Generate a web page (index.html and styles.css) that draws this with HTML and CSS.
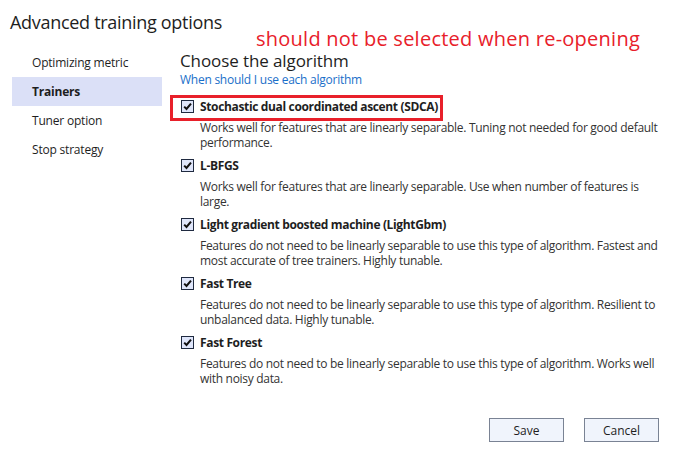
FILE: index.html
```html
<!DOCTYPE html>
<html lang="en">
<head>
    <meta charset="UTF-8">
    <title>Advanced training options</title>
    <link rel="stylesheet" href="styles.css">
</head>
<body>
    <div class="dialog">
        <h1 class="title">Advanced training options</h1>
        <div class="note">should not be selected when re-opening</div>
        <div class="main">
            <ul class="nav">
                <li>Optimizing metric</li>
                <li class="active">Trainers</li>
                <li>Tuner option</li>
                <li>Stop strategy</li>
            </ul>
            <div class="content">
                <h2 class="heading">Choose the algorithm</h2>
                <a class="help" href="#">When should I use each algorithm</a>
                <div class="algos">
                    <div class="algo flagged">
                        <label class="algo-label"><span class="check"><svg viewBox="0 0 11 11"><path d="M2.2 5.6 L4.5 8 L9 2.6"/></svg></span>Stochastic dual coordinated ascent (SDCA)</label>
                        <p class="desc">Works well for features that are linearly separable. Tuning not needed for good default performance.</p>
                    </div>
                    <div class="algo">
                        <label class="algo-label"><span class="check"><svg viewBox="0 0 11 11"><path d="M2.2 5.6 L4.5 8 L9 2.6"/></svg></span>L-BFGS</label>
                        <p class="desc">Works well for features that are linearly separable. Use when number of features is large.</p>
                    </div>
                    <div class="algo">
                        <label class="algo-label"><span class="check"><svg viewBox="0 0 11 11"><path d="M2.2 5.6 L4.5 8 L9 2.6"/></svg></span>Light gradient boosted machine (LightGbm)</label>
                        <p class="desc">Features do not need to be linearly separable to use this type of algorithm. Fastest and most accurate of tree trainers. Highly tunable.</p>
                    </div>
                    <div class="algo">
                        <label class="algo-label"><span class="check"><svg viewBox="0 0 11 11"><path d="M2.2 5.6 L4.5 8 L9 2.6"/></svg></span>Fast Tree</label>
                        <p class="desc">Features do not need to be linearly separable to use this type of algorithm. Resilient to unbalanced data. Highly tunable.</p>
                    </div>
                    <div class="algo">
                        <label class="algo-label"><span class="check"><svg viewBox="0 0 11 11"><path d="M2.2 5.6 L4.5 8 L9 2.6"/></svg></span>Fast Forest</label>
                        <p class="desc">Features do not need to be linearly separable to use this type of algorithm. Works well with noisy data.</p>
                    </div>
                </div>
            </div>
        </div>
        <div class="buttons">
            <button>Save</button>
            <button>Cancel</button>
        </div>
    </div>
</body>
</html>
```

FILE: styles.css
```css
body {
    margin: 0;
    background: #ffffff;
    color: #1e1e1e;
    font-family: "Open Sans", "Noto Sans", sans-serif;
}
.dialog {
    position: relative;
    width: 687px;
    height: 454px;
}
.title {
    margin: 0;
    padding: 10px 0 0 10px;
    font-size: 18px;
    font-weight: normal;
    line-height: 24px;
    letter-spacing: -0.3px;
}
.note {
    position: absolute;
    left: 256px;
    top: 29px;
    color: #e8202a;
    font-size: 20px;
    line-height: 20px;
    letter-spacing: 0.25px;
}
.main {
    display: flex;
    margin-top: 14px;
}
.nav {
    list-style: none;
    margin: 0 0 0 12px;
    padding: 0;
    width: 150px;
}
.nav li {
    height: 29px;
    line-height: 29px;
    padding-left: 20px;
    font-size: 12px;
    letter-spacing: -0.2px;
}
.nav li.active {
    background: #dbe0f7;
    font-weight: bold;
}
.content {
    margin-left: 18px;
    margin-top: 4px;
}
.heading {
    margin: 0;
    font-size: 17px;
    font-weight: normal;
    line-height: 18px;
    letter-spacing: -0.1px;
}
.help {
    display: block;
    margin-top: 2px;
    color: #1a6fc9;
    text-decoration: none;
    font-size: 12px;
    line-height: 16px;
    letter-spacing: -0.25px;
}
.algos {
    margin-top: 7px;
}
.algo {
    position: relative;
}
.algo-label {
    display: flex;
    align-items: center;
    height: 22px;
    font-size: 12px;
    font-weight: bold;
    letter-spacing: -0.35px;
}
.check {
    width: 13px;
    height: 13px;
    margin: 0 6px 0 1px;
    box-sizing: border-box;
    border: 1px solid #1f2a40;
    background: #dfe6fb;
    display: inline-block;
}
.check svg {
    display: block;
    width: 11px;
    height: 11px;
}
.check path {
    fill: none;
    stroke: #111;
    stroke-width: 2;
}
.desc {
    margin: 3px 0 4px 20px;
    width: 470px;
    font-size: 12px;
    line-height: 15px;
    letter-spacing: -0.3px;
    color: #333;
}
.flagged::before {
    content: "";
    position: absolute;
    left: -10px;
    top: 0;
    width: 273px;
    height: 26px;
    box-sizing: border-box;
    border: 3px solid #e8202a;
}
.buttons {
    position: absolute;
    right: 28px;
    bottom: 12px;
    display: flex;
    gap: 20px;
}
.buttons button {
    width: 75px;
    height: 24px;
    background: #f0f4fc;
    border: 1px solid #7a8394;
    font-family: inherit;
    font-size: 12px;
    color: #1e1e1e;
}
```
